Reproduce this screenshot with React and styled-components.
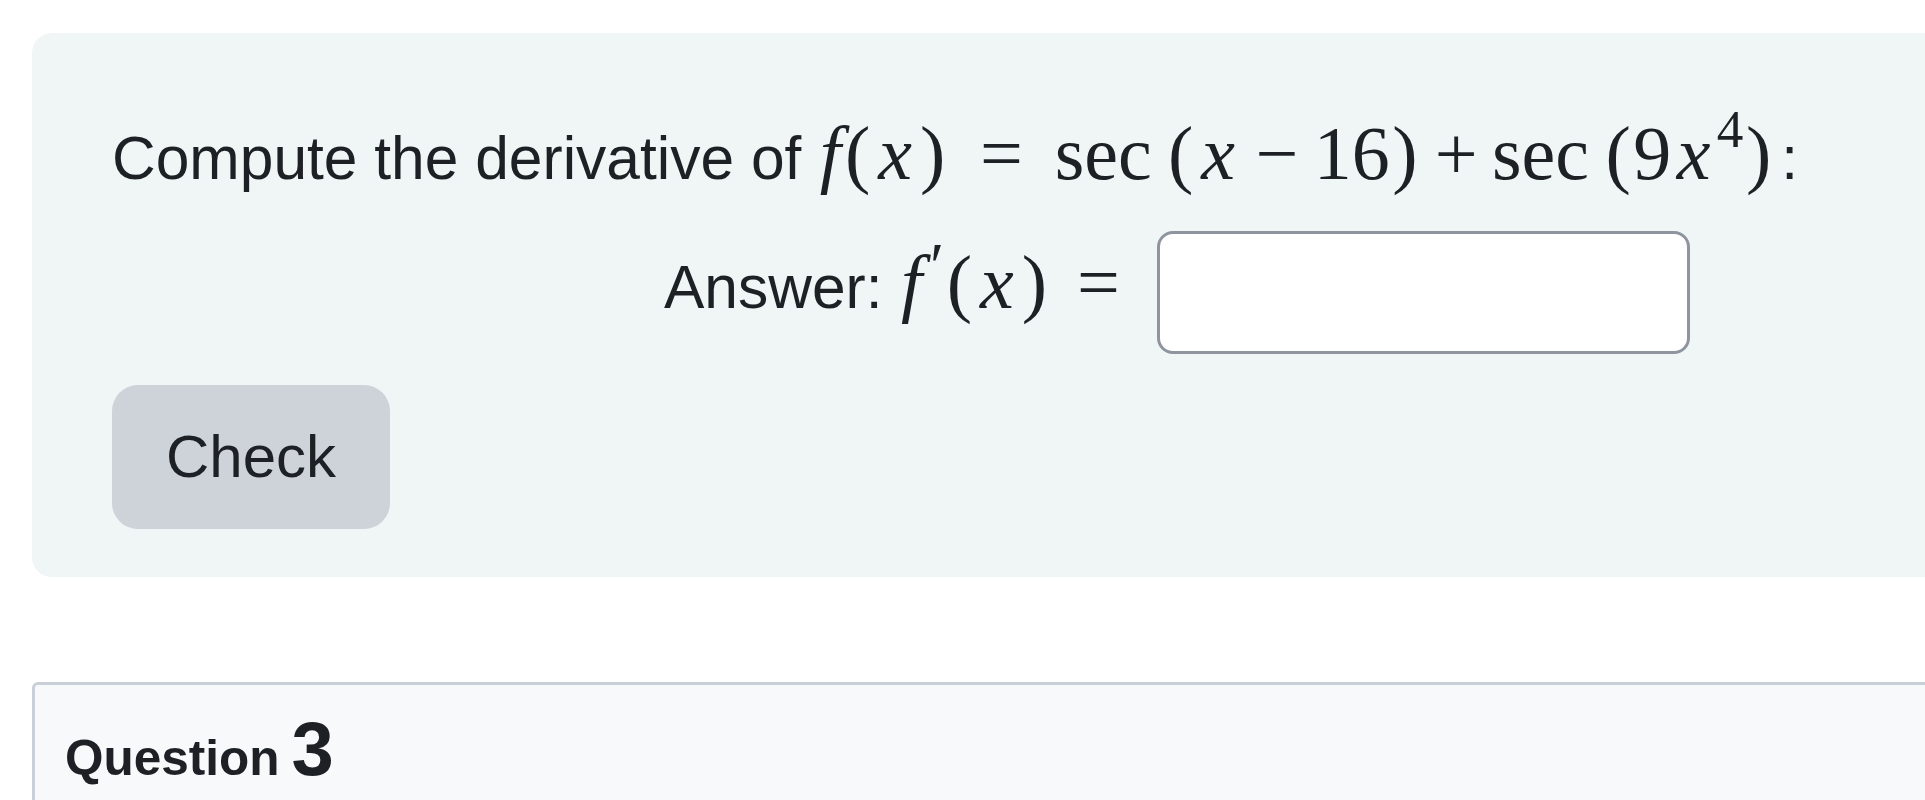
import styled, { createGlobalStyle } from "styled-components"

const GlobalStyle = createGlobalStyle`
    html, body {
        margin: 0;
        padding: 0;
        background: #fff;
        overflow: hidden;
    }
    body {
        font-family: "Liberation Sans", Arial, sans-serif;
        color: #1d2125;
    }
`

const Page = styled.div`
    padding: 33px 0 0 32px;
`

const Formulation = styled.div`
    background-color: #f0f6f6;
    border-radius: 20px 0 0 20px;
    margin-right: -60px;
    padding: 80px 0 48px 80px;
`

const QText = styled.p`
    margin: 0;
    font-size: 60.5px;
    line-height: 90px;
    white-space: nowrap;
`

const Math = styled.span`
    font-family: "Liberation Serif", "Times New Roman", serif;
    font-size: 76px;
    line-height: 1;
    white-space: nowrap;
`

const V = styled.i`
    font-style: italic;
    margin: 0 ${(p) => p.$pad || "0.07em"};
`

const Paren = styled.span`
    margin: 0 0.035em;
`

// operator / relation with spacing around it
const Op = styled.span`
    margin: 0 ${(p) => p.$space || "0.2em"};
`

const Fn = styled.span`
    margin-right: ${(p) => p.$after || "0.18em"};
`

const Sup = styled.sup`
    font-size: ${(p) => p.$size || "70%"};
    line-height: 0;
    vertical-align: ${(p) => p.$raise || "0.6em"};
    margin-left: ${(p) => p.$ml || "0.02em"};
`

const Colon = styled.span`
    margin-left: 0.12em;
`

const AnswerRow = styled.div`
    display: flex;
    align-items: center;
    margin: 28px 0 0 552px;
    font-size: 60.5px;
    gap: 10px;
`

const Label = styled.span`
    line-height: 90px;
    padding-bottom: 12px;
    white-space: nowrap;
`

const AnswerInput = styled.input`
    box-sizing: border-box;
    width: 533px;
    height: 123px;
    border: 3px solid #8f959e;
    border-radius: 16px;
    background: #fff;
    font-size: 60px;
    padding: 0 24px;
    outline: none;
`

const CheckButton = styled.button`
    display: block;
    margin-top: 31px;
    box-sizing: border-box;
    height: 144px;
    padding: 0 54px;
    border: none;
    border-radius: 26px;
    background-color: #ced3da;
    color: #1d2125;
    font-family: "Liberation Sans", Arial, sans-serif;
    font-size: 60px;
    line-height: 90px;
`

const InfoBox = styled.div`
    margin: 105px -60px 0 0;
    background-color: #f8f9fa;
    border: 3px solid #cad0d7;
    border-radius: 6px 0 0 0;
    padding: 26px 0 0 30px;
    height: 200px;
`

const InfoTitle = styled.h3`
    margin: 0;
    font-size: 49.5px;
    font-weight: 700;
    line-height: 1.2;
`

const QNo = styled.span`
    font-size: 76px;
    line-height: 1;
    margin-left: 12px;
`

const App = () => {
    return (
        <Page>
            <GlobalStyle />
            <Formulation>
                <QText>
                    Compute the derivative of{" "}
                    <Math>
                        <V $pad="0.02em">f</V>
                        <Paren>(</Paren>
                        <V>x</V>
                        <Paren>)</Paren>
                        <Op $space="0.42em">=</Op>
                        <Fn>sec</Fn>
                        <Paren>(</Paren>
                        <V>x</V>
                        <Op>−</Op>
                        16
                        <Paren>)</Paren>
                        <Op $space="0.19em">+</Op>
                        <Fn>sec</Fn>
                        <Paren>(</Paren>9<V>x</V>
                        <Sup>4</Sup>
                        <Paren>)</Paren>
                    </Math>
                    <Colon>:</Colon>
                </QText>
                <AnswerRow>
                    <Label>
                        Answer:{" "}
                        <Math>
                            <V $pad="0.02em">f</V>
                            <Sup $size="85%" $raise="0.3em" $ml="0.1em">′</Sup>
                            <Paren>(</Paren>
                            <V>x</V>
                            <Paren>)</Paren>
                            <Op $space="0.36em">=</Op>
                        </Math>
                    </Label>
                    <AnswerInput type="text" />
                </AnswerRow>
                <CheckButton>Check</CheckButton>
            </Formulation>
            <InfoBox>
                <InfoTitle>
                    Question<QNo>3</QNo>
                </InfoTitle>
            </InfoBox>
        </Page>
    )
}

export default App
